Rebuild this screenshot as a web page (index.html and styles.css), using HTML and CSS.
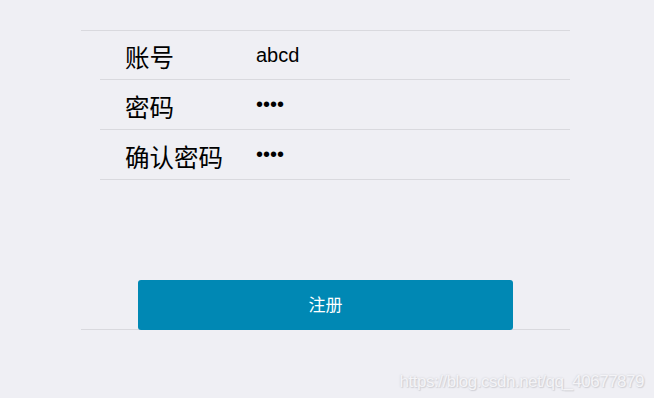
FILE: index.html
```html
<!DOCTYPE html>
<html lang="zh-CN">
<head>
<meta charset="utf-8">
<title>注册</title>
<link rel="stylesheet" href="styles.css">
</head>
<body>
<div class="page">
  <div class="form">
    <div class="list">
      <div class="row">
        <span class="label">账号</span>
        <span class="value">abcd</span>
      </div>
      <div class="row">
        <span class="label">密码</span>
        <span class="value dots">••••</span>
      </div>
      <div class="row">
        <span class="label">确认密码</span>
        <span class="value dots">••••</span>
      </div>
    </div>
    <div class="footer">
      <button class="submit" type="button">注册</button>
    </div>
  </div>
  <div class="watermark">https://blog.csdn.net/qq_40677879</div>
</div>
</body>
</html>
```

FILE: styles.css
```css
html, body {
  margin: 0;
  padding: 0;
  background: #efeff4;
}

.page {
  position: relative;
  width: 654px;
  height: 398px;
  padding-top: 30px;
  box-sizing: border-box;
  font-family: "Liberation Sans", "Noto Sans CJK SC", sans-serif;
}

.form {
  margin-left: 81px;
  width: 489px;
}

.list {
  border-top: 1px solid #d9d9de;
}

.row {
  display: flex;
  align-items: center;
  height: 49px;
  margin-left: 19px;
  border-bottom: 1px solid #d9d9de;
}

.row:first-child {
  height: 48px;
}

.label {
  width: 156px;
  padding-left: 25px;
  padding-top: 3px;
  box-sizing: border-box;
  font-family: "Noto Sans CJK SC", sans-serif;
  font-size: 24.5px;
  color: #000;
  flex-shrink: 0;
}

.value {
  font-family: "Liberation Sans", sans-serif;
  font-size: 20px;
  color: #000;
}

.footer {
  padding-top: 100px;
  border-bottom: 1px solid #d9d9de;
  display: flex;
}

.submit {
  position: relative;
  margin: 0 0 -1px 57px;
  width: 375px;
  height: 50px;
  border: none;
  border-radius: 3px;
  background: #0088b4;
  color: #fff;
  font-family: "Noto Sans CJK SC", sans-serif;
  font-size: 17px;
  padding: 0 0 3px 0;
}

.watermark {
  position: absolute;
  right: 10px;
  bottom: 6px;
  font-family: "Liberation Sans", sans-serif;
  font-size: 17px;
  letter-spacing: -0.5px;
  color: #f4f4f7;
  text-shadow: 0 0 2px #c9c9cf, 1px 1px 1px #d4d4d9;
}
```
